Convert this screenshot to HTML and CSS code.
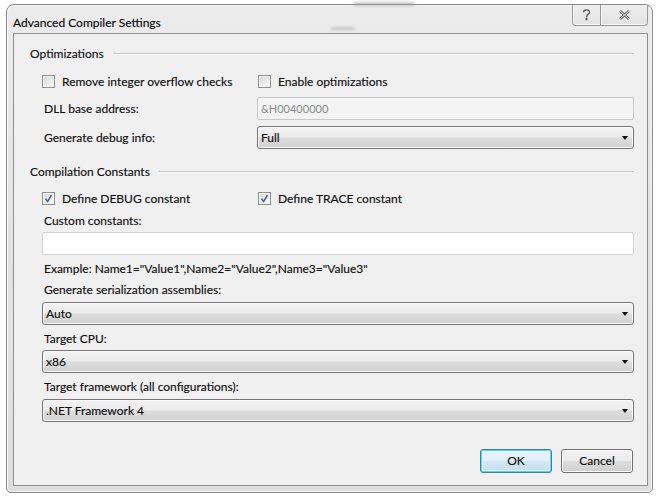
FILE: index.html
```html
<!DOCTYPE html>
<html>
<head>
<meta charset="utf-8">
<link rel="stylesheet" href="styles.css">
</head>
<body>
<div class="window">
  <div class="titlebar">
    <span class="title">Advanced Compiler Settings</span>
    <span class="smudge smudge-top"></span>
    <span class="smudge smudge-mid"></span>
    <div class="caption-btns">
      <div class="cap help">
        <svg width="9" height="12" viewBox="0 0 9 12"><path d="M1.5 3.2 C1.5 1.6 2.8 0.8 4.5 0.8 C6.3 0.8 7.5 1.8 7.5 3.2 C7.5 4.6 6.2 5.1 5.4 5.7 C4.9 6.1 4.8 6.6 4.8 7.4 L4.2 7.4 L4.2 7.4 M4.2 9.2 L4.8 9.2 L4.8 10.6 L4.2 10.6 Z" fill="none" stroke="#555" stroke-width="1.3"/></svg>
      </div>
      <div class="cap close">
        <svg width="11" height="10" viewBox="0 0 11 10"><path d="M1 1 L10 9 M10 1 L1 9" stroke="#666" stroke-width="2.4"/><path d="M1 1 L10 9 M10 1 L1 9" stroke="#f4f4f4" stroke-width="0.8"/></svg>
      </div>
    </div>
  </div>
  <div class="client">
    <div class="group-head g1"><span>Optimizations</span><i class="rule"></i></div>
    <div class="grid2 row-cb1">
      <label class="cb"><span class="box"></span>Remove integer overflow checks</label>
      <label class="cb"><span class="box"></span>Enable optimizations</label>
    </div>
    <div class="grid2 row-dll">
      <span class="lbl">DLL base address:</span>
      <div class="textbox disabled">&amp;H00400000</div>
    </div>
    <div class="grid2 row-dbg">
      <span class="lbl">Generate debug info:</span>
      <div class="combo">Full<span class="arrow"></span></div>
    </div>

    <div class="group-head g2"><span>Compilation Constants</span><i class="rule"></i></div>
    <div class="grid2 row-cb2">
      <label class="cb"><span class="box checked"><svg width="9" height="9" viewBox="0 0 9 9"><path d="M1.5 4.8 L3.7 7.4 L7.5 1.2" fill="none" stroke="#4a5c94" stroke-width="1.5"/></svg></span>Define DEBUG constant</label>
      <label class="cb"><span class="box checked"><svg width="9" height="9" viewBox="0 0 9 9"><path d="M1.5 4.8 L3.7 7.4 L7.5 1.2" fill="none" stroke="#4a5c94" stroke-width="1.5"/></svg></span>Define TRACE constant</label>
    </div>
    <div class="ind lbl row-custom">Custom constants:</div>
    <div class="ind textbox white row-custin"></div>
    <div class="ind lbl row-example">Example: Name1="Value1",Name2="Value2",Name3="Value3"</div>
    <div class="ind lbl row-ser">Generate serialization assemblies:</div>
    <div class="ind combo row-sersel">Auto<span class="arrow"></span></div>
    <div class="ind lbl row-cpu">Target CPU:</div>
    <div class="ind combo row-cpusel">x86<span class="arrow"></span></div>
    <div class="ind lbl row-fw">Target framework (all configurations):</div>
    <div class="ind combo row-fwsel">.NET Framework 4<span class="arrow"></span></div>

    <div class="buttons">
      <div class="btn default">OK</div>
      <div class="btn">Cancel</div>
    </div>
  </div>
</div>
</body>
</html>
```

FILE: styles.css
```css
* { box-sizing: border-box; }
html, body { margin: 0; padding: 0; }
body {
  width: 661px;
  height: 499px;
  background: #ffffff;
  font-family: "Lato", "Open Sans", sans-serif;
  font-size: 12px;
  color: #0f0f0f;
  overflow: hidden;
}
.window {
  margin: 4px 0 0 6px;
  width: 647px;
  height: 489px;
  border: 1px solid #8a8a8a;
  border-radius: 8px 8px 5px 5px;
  background: linear-gradient(180deg, #ececec 0%, #e4e4e4 40%, #dedede 100%);
  box-shadow: inset 0 0 0 1px #f6f6f6;
  padding: 0 4px 6px 6px;
  display: flex;
  flex-direction: column;
}
.titlebar {
  position: relative;
  height: 28px;
  display: flex;
  align-items: flex-start;
}
.title {
  padding: 10px 0 0 0;
  line-height: 15px;
  font-size: 12px;
  color: #0a0a0a;
  -webkit-text-stroke: 0.15px #0a0a0a;
}
.smudge {
  position: absolute;
  background: #9a9a9a;
  filter: blur(1.5px);
  border-radius: 2px;
}
.smudge-top { left: 340px; top: -3px; width: 62px; height: 4px; opacity: 0.55; }
.smudge-mid { left: 318px; top: 22px; width: 24px; height: 3px; opacity: 0.45; }
.caption-btns {
  margin-left: auto;
  display: flex;
  height: 21px;
}
.cap {
  height: 21px;
  display: flex;
  align-items: center;
  justify-content: center;
  border: 1px solid #9a9a9a;
  border-top: none;
  background: linear-gradient(180deg, #eeeeee, #e2e2e2);
  box-shadow: inset 0 -1px 0 #f8f8f8, inset 1px 0 0 #f8f8f8;
}
.cap.help { width: 28px; border-radius: 0 0 0 4px; border-right: none; }
.cap.close { width: 48px; border-radius: 0 0 4px 0; }

.client {
  flex: 1;
  border: 1px solid #8f8f8f;
  background: #f0f0f0;
  padding: 0 13px 0 16px;
  display: flex;
  flex-direction: column;
  -webkit-text-stroke: 0.15px #111;
}
.group-head {
  height: 20px;
  display: flex;
  align-items: center;
  line-height: 16px;
}
.group-head .rule {
  flex: 1;
  margin-left: 9px;
  height: 2px;
  border-top: 1px solid #c9c9c9;
  border-bottom: 1px solid #fbfbfb;
}
.g1 { margin-top: 10px; }
.g2 { margin-top: 13px; }

.grid2 {
  margin-left: 12px;
  display: grid;
  grid-template-columns: 215px 1fr;
  align-items: center;
}
.row-cb1 { margin-top: 7px; height: 20px; }
.row-dll { margin-top: 6px; height: 23px; }
.row-dbg { margin-top: 6px; height: 23px; }
.row-cb2 { margin-top: 6px; height: 20px; }

.cb { display: flex; align-items: center; white-space: nowrap; }
.grid2 .cb:nth-child(2) { margin-left: 1px; }
.box {
  width: 13px;
  height: 13px;
  margin-right: 7px;
  border: 1px solid #8f8f8f;
  background: linear-gradient(135deg, #d6d6d6 0%, #ececec 55%, #fbfbfb 100%);
  box-shadow: inset 0 0 0 1px #f4f4f4;
  display: flex;
  align-items: center;
  justify-content: center;
}
.lbl { line-height: 16px; height: 16px; padding-left: 2px; white-space: nowrap; }
.ind { margin-left: 12px; }

.textbox {
  height: 23px;
  border: 1px solid #b7b7b7;
  border-radius: 2px;
  padding: 0 3px;
  line-height: 21px;
}
.textbox.disabled { background: #f3f3f3; color: #8a8a8a; border-color: #c9c9c9; font-size: 11px; -webkit-text-stroke: 0; }
.textbox.white { background: #ffffff; border-color: #d4d4d4; }

.combo {
  position: relative;
  height: 23px;
  border: 1px solid #767676;
  border-radius: 3px;
  padding: 0 3px;
  line-height: 21px;
  background: linear-gradient(180deg, #f3f3f3 0%, #ebebeb 48%, #dddddd 52%, #d2d2d2 100%);
  box-shadow: inset 0 0 0 1px #f8f8f8;
}
.arrow {
  position: absolute;
  right: 5px;
  top: 9px;
  width: 0; height: 0;
  border-left: 3.5px solid transparent;
  border-right: 3.5px solid transparent;
  border-top: 4px solid #111;
}
.row-custom { margin-top: 5px; }
.row-custin { margin-top: 3px; }
.row-example { margin-top: 6px; }
.row-ser { margin-top: 5px; }
.row-sersel { margin-top: 4px; }
.row-cpu { margin-top: 6px; }
.row-cpusel { margin-top: 3px; }
.row-fw { margin-top: 6px; }
.row-fwsel { margin-top: 4px; }

.buttons {
  margin-top: 27px;
  display: flex;
  justify-content: flex-end;
  gap: 9px;
  padding-right: 1px;
}
.btn {
  width: 72px;
  height: 24px;
  border: 1px solid #707070;
  border-radius: 3px;
  text-align: center;
  line-height: 22px;
  background: linear-gradient(180deg, #f2f2f2 0%, #ebebeb 48%, #dddddd 52%, #cfcfcf 100%);
  box-shadow: inset 0 0 0 1px #fafafa;
}
.btn.default {
  border-color: #3c7fb1;
  box-shadow: inset 0 0 0 1px #48d8fb, inset 0 0 0 2px #f4f4f4;
  background: linear-gradient(180deg, #eaf6fd 0%, #e0eef8 48%, #d2e6f5 52%, #c6dff2 100%);
}
```
